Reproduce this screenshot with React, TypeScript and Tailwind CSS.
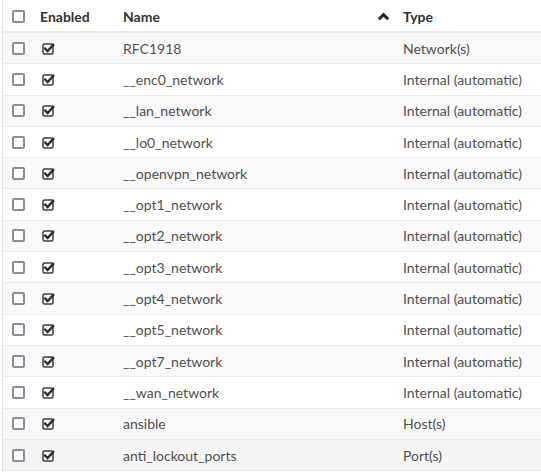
import React from 'react';

const ROWS: { name: string; type: string }[] = [
  { name: 'RFC1918', type: 'Network(s)' },
  { name: '__enc0_network', type: 'Internal (automatic)' },
  { name: '__lan_network', type: 'Internal (automatic)' },
  { name: '__lo0_network', type: 'Internal (automatic)' },
  { name: '__openvpn_network', type: 'Internal (automatic)' },
  { name: '__opt1_network', type: 'Internal (automatic)' },
  { name: '__opt2_network', type: 'Internal (automatic)' },
  { name: '__opt3_network', type: 'Internal (automatic)' },
  { name: '__opt4_network', type: 'Internal (automatic)' },
  { name: '__opt5_network', type: 'Internal (automatic)' },
  { name: '__opt7_network', type: 'Internal (automatic)' },
  { name: '__wan_network', type: 'Internal (automatic)' },
  { name: 'ansible', type: 'Host(s)' },
  { name: 'anti_lockout_ports', type: 'Port(s)' },
];

function Box() {
  return <span className="block w-[13px] h-[13px] rounded-[2px] border-2 border-[#8d8b9b] bg-white" />;
}

function CheckSquare() {
  return (
    <svg width="13" height="13" viewBox="0 0 13 13" className="block">
      <rect x="1" y="2" width="10" height="10" rx="1.5" fill="none" stroke="#3d3d3d" strokeWidth="1.5" />
      <path d="M3.2 6.6 L5.6 9 L11.2 3" fill="none" stroke="#2b2b2b" strokeWidth="2.3" strokeLinecap="square" />
    </svg>
  );
}

function Caret() {
  return (
    <svg width="13" height="9" viewBox="0 0 13 9" className="block">
      <path d="M1.8 7.2 L6.5 2.6 L11.2 7.2" fill="none" stroke="#222" strokeWidth="3" />
    </svg>
  );
}

export default function App() {
  return (
    <div
      className="w-[541px] h-[472px] overflow-hidden bg-white text-[14px] text-[#4f4f4f]"
      style={{ fontFamily: 'Lato, "Noto Sans", sans-serif' }}
    >
      <div className="ml-[2px] border-l border-[#e3e3e3] h-full">
        <div className="grid grid-cols-[29px_83px_280px_1fr] h-[33px] pt-[1px] items-center border-b-2 border-[#ececec] font-bold text-[#333]">
          <div className="pl-[9px]"><Box /></div>
          <div className="pl-[8px]">Enabled</div>
          <div className="pl-[8px] pr-[5px] flex items-center justify-between">
            <span>Name</span>
            <Caret />
          </div>
          <div className="pl-[8px]">Type</div>
        </div>
        {ROWS.map((row, i) => (
          <div
            key={row.name}
            className={`grid grid-cols-[29px_83px_280px_1fr] h-[31.3px] items-center border-b border-[#ebebeb] ${
              i === ROWS.length - 1 ? 'bg-[#f5f5f5]' : i % 2 === 0 ? 'bg-[#f9f9f9]' : 'bg-white'
            }`}
          >
            <div className="pl-[9px]"><Box /></div>
            <div className="pl-[10px]"><CheckSquare /></div>
            <div className="pl-[8px]">{row.name}</div>
            <div className="pl-[8px] whitespace-nowrap">{row.type}</div>
          </div>
        ))}
      </div>
    </div>
  );
}
